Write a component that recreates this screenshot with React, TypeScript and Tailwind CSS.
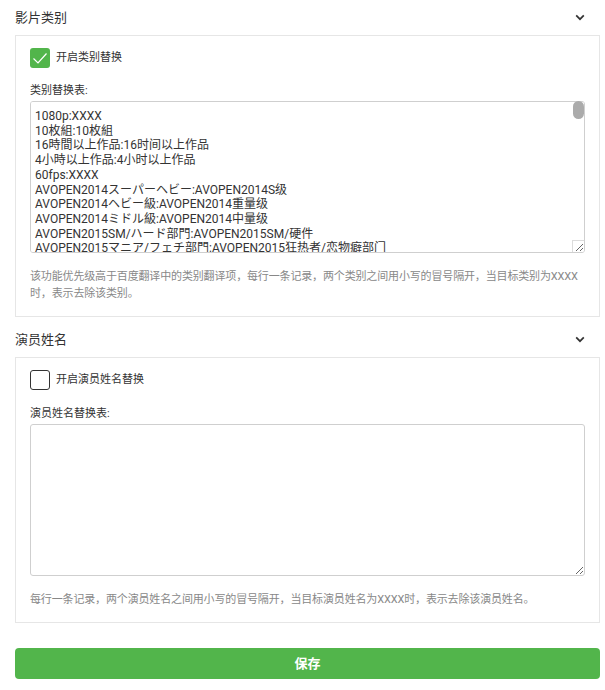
import React from 'react';

const genreLines = [
    '1080p:XXXX',
    '10枚組:10枚組',
    '16時間以上作品:16时间以上作品',
    '4小時以上作品:4小时以上作品',
    '60fps:XXXX',
    'AVOPEN2014スーパーヘビー:AVOPEN2014S级',
    'AVOPEN2014ヘビー級:AVOPEN2014重量级',
    'AVOPEN2014ミドル級:AVOPEN2014中量级',
    'AVOPEN2015SM/ハード部門:AVOPEN2015SM/硬件',
    'AVOPEN2015マニア/フェチ部門:AVOPEN2015狂热者/恋物癖部门',
    'AVOPEN2015乙女部門:AVOPEN2015少女部门',
    'AVOPEN2015企画部門:AVOPEN2015企画部门',
    'AVOPEN2015女優部門:AVOPEN2015女优部门',
    'AVOPEN2016ドラマ・ドキュメンタリー部門:AVOPEN2016剧情・纪录片部门',
    'AVOPEN2016企画部門:AVOPEN2016企画部门',
    'AVOPEN2016女優部門:AVOPEN2016女优部门',
    'AVOPEN2016乙女部門:AVOPEN2016少女部门',
    'AVOPEN2017企画部門:AVOPEN2017企画部门',
    'AVOPEN2017女優部門:AVOPEN2017女优部门',
    'AVOPEN2017ドラマ部門:AVOPEN2017剧情部门',
    'AVOPEN2018企画部門:AVOPEN2018企画部门',
    'AVOPEN2018女優部門:AVOPEN2018女优部门',
    'DMM獨家:DMM独家',
    'Vシネマ:V影院',
    'アクション:动作',
    'アニメ:动画',
    'インストラクター:教练',
    'ウェイトレス:服务员',
    'オタク:御宅族',
    'お姉さん:姐姐',
    'お嬢様・令嬢:大小姐',
    'カップル:情侣',
    'キャンギャル:宣传女郎',
    'コスプレ:角色扮演',
    'サンプル動画:样品视频',
    'スポーツ:运动',
    'セーラー服:水手服',
    'ダンス:舞蹈',
    'チアガール:啦啦队',
    'ツンデレ:傲娇',
    'ドキュメンタリー:纪录片',
    'ドラマ:剧情',
    'ナース:护士',
    'ハイビジョン:高清',
    'バスガイド:巴士导游',
    'ホテル:酒店',
    'ミニスカ:迷你裙',
    'メイド:女佣',
    'モデル:模特',
    'リゾート:度假',
    '旅行:旅行',
    '温泉:温泉',
    '学園もの:校园',
    '制服:制服',
    '単体作品:单体作品',
    '女教師:女教师',
    '妄想:妄想',
    '恋愛:恋爱',
    '職業色々:各种职业',
    '独占配信:独占发布',
    'ベスト・総集編:精选・综合',
    'デビュー作品:出道作品',
    '時間停止:时间停止',
    '水着:泳装',
    '浴衣・着物:浴衣・和服',
    'OL:OL',
    'ギャル:辣妹',
    'スチュワーデス:空姐',
    '体育着:运动服',
    '女子大生:女大学生',
    'お母さん:母亲',
    '姉・妹:姐妹',
    '家庭教師:家庭教师',
    '秘書:秘书',
    '看護婦・ナース:护士',
    '受付嬢:接待员',
    '新人:新人',
    '美少女:美少女',
    '素人:素人',
    '投稿:投稿',
    '企画:企画',
    '主観:主观视角',
    '長身:高个子',
    'ミニ系:娇小',
    'スレンダー:苗条',
    '日焼け:晒黑',
    '眼鏡:眼镜',
    '黒髪:黑发',
    'ポニーテール:马尾',
    'ツインテール:双马尾',
    '外国人:外国人',
    'アジア女優:亚洲女演员',
    '白人:白人',
];

const fontFamily = "font-['Roboto','Noto_Sans_CJK_SC',sans-serif]";

const ChevronDown: React.FC = () => (
    <svg width="10" height="7" viewBox="0 0 10 7" fill="none" xmlns="http://www.w3.org/2000/svg">
        <path d="M1.2 1.4 L5 5.2 L8.8 1.4" stroke="#333" strokeWidth="1.7" />
    </svg>
);

const Checkbox: React.FC<{ checked: boolean; label: string }> = ({ checked, label }) => (
    <label className="flex items-center h-[20px] cursor-pointer">
        {checked ? (
            <span className="w-[20px] h-[20px] rounded-[3px] bg-[#52b54b] flex items-center justify-center">
                <svg width="20" height="20" viewBox="0 0 20 20" fill="none" xmlns="http://www.w3.org/2000/svg">
                    <path d="M3.5 10.5 L8 15 L16.5 5.5" stroke="#fff" strokeWidth="1.2" />
                </svg>
            </span>
        ) : (
            <span className="w-[20px] h-[20px] rounded-[3px] border border-[#333] bg-white"></span>
        )}
        <span className="ml-[6px] text-[11px] text-[#333]">{label}</span>
    </label>
);

const SectionHeader: React.FC<{ title: string; className?: string }> = ({ title, className }) => (
    <div className={`flex items-center justify-between h-[35px] ${className ?? ''}`}>
        <h2 className="text-[13px] text-[#333] font-normal">{title}</h2>
        <span className="mr-[15px] flex items-center">
            <ChevronDown />
        </span>
    </div>
);

const textareaClass =
    'block w-full border border-[#cfcfcf] rounded-[3px] bg-white pl-[4px] pr-[14px] pt-[7px] pb-[5px] text-[12px] leading-[14.7px] text-[#333] outline-none ' +
    "font-['Roboto','Noto_Sans_CJK_SC',sans-serif]";

const App: React.FC = () => {
    return (
        <div className={`bg-white min-h-[690px] pl-[15px] pr-[5px] ${fontFamily}`}>
            {/* 影片类别 */}
            <SectionHeader title="影片类别" />
            <div className="border border-[#e6e6e6] px-[14px] pt-[12px] pb-[14px]">
                <Checkbox checked={true} label="开启类别替换" />
                <div className="mt-[15px] text-[11px] leading-[15px] text-[#333]">类别替换表:</div>
                <div className="relative mt-[3px]">
                    <textarea
                        className={`h-[152px] ${textareaClass}`}
                        defaultValue={genreLines.join('\n')}
                        spellCheck={false}
                    />
                    {/* scrollbar thumb + corner */}
                    <span className="pointer-events-none absolute top-0 right-[1px] w-[11px] h-[18px] rounded-full bg-[#ababab]"></span>
                    <span className="pointer-events-none absolute bottom-[1px] right-[1px] w-[12px] h-[12px] border-l border-t border-[#dcdcdc]"></span>
                </div>
                <p className="mt-[15px] text-[11px] leading-[17px] text-[#888] tracking-[-0.15px]">
                    该功能优先级高于百度翻译中的类别翻译项，每行一条记录，两个类别之间用小写的冒号隔开，当目标类别为XXXX时，表示去除该类别。
                </p>
            </div>

            {/* 演员姓名 */}
            <SectionHeader title="演员姓名" className="mt-[5px]" />
            <div className="border border-[#e6e6e6] px-[14px] pt-[12px] pb-[14px]">
                <Checkbox checked={false} label="开启演员姓名替换" />
                <div className="mt-[16px] text-[11px] leading-[15px] text-[#333]">演员姓名替换表:</div>
                <textarea className={`mt-[3px] h-[152px] ${textareaClass}`} defaultValue="" spellCheck={false} />
                <p className="mt-[15px] text-[11px] leading-[17px] text-[#888] tracking-[-0.15px]">
                    每行一条记录，两个演员姓名之间用小写的冒号隔开，当目标演员姓名为XXXX时，表示去除该演员姓名。
                </p>
            </div>

            {/* Save */}
            <button className="mt-[25px] w-full h-[31px] rounded-[4px] bg-[#52b54b] text-white text-[13px] font-bold">
                保存
            </button>
        </div>
    );
};

export default App;
